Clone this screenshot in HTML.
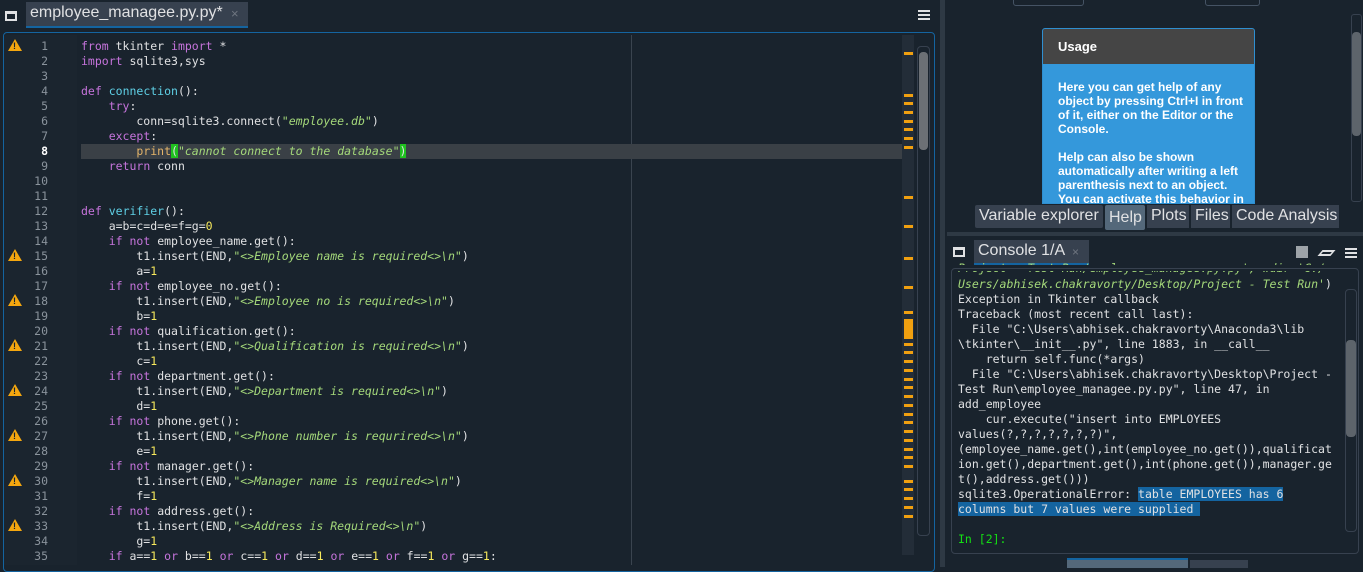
<!DOCTYPE html>
<html><head><meta charset="utf-8">
<style>
*{margin:0;padding:0;box-sizing:border-box}
body{width:1363px;height:567px;background:#19232d;position:relative;overflow:hidden;font-family:"Liberation Sans",sans-serif;color:#e0e1e3}
.abs{position:absolute}
.mono{font-family:"DejaVu Sans Mono","Liberation Mono",monospace;font-size:11.5px;white-space:pre}
.ln{position:absolute;left:24px;width:24px;text-align:right;color:#8a939c;font-family:"DejaVu Sans Mono",monospace;font-size:11.5px;line-height:15px}
.cl{position:absolute;left:81px;line-height:15px;color:#e0e1e3}
.k{color:#c674dc}.f{color:#5fd0e6}.s{color:#a4d87a;font-style:italic}.n{color:#f7e95c}.b{color:#e4b46a}
.warn{position:absolute;left:8px;width:0;height:0;border-left:7px solid transparent;border-right:7px solid transparent;border-bottom:12px solid #f5a70f}
.warn:after{content:"!";position:absolute;left:-2px;top:2px;font:bold 9px "Liberation Sans";color:#19232d}
.mk{position:absolute;left:904px;width:9px;height:3px;background:#f0a010}
.cons{position:absolute;left:958px;line-height:15px;color:#e0e1e3}
</style></head><body>
<div class="abs" style="left:5px;top:11px;width:12px;height:10px;border:2px solid #e0e1e3;border-top-width:3px"></div>
<div class="abs" style="left:26px;top:2px;width:222px;height:26px;background:#37414f;border-bottom:2px solid #1464a0"></div>
<div class="abs" style="left:30px;top:4px;font-size:16px;color:#e0e1e3">employee_managee.py.py*</div>
<div class="abs" style="left:231px;top:6px;font-size:13px;color:#6f7680">×</div>
<div class="abs" style="left:918px;top:10px;width:12px;height:2px;background:#e0e1e3;box-shadow:0 4px 0 #e0e1e3,0 8px 0 #e0e1e3"></div>
<div class="abs" style="left:3px;top:32px;width:932px;height:540px;border:1px solid #1464a0;border-radius:4px"></div>
<div class="abs" style="left:4px;top:35px;width:73px;height:530px;background:#1b252f"></div>
<div class="abs" style="left:631px;top:35px;width:1px;height:530px;background:#3a444f"></div>
<div class="abs" style="left:81px;top:144px;width:821px;height:15px;background:#3a4046"></div>
<div class="abs" style="left:902px;top:35px;width:12px;height:520px;background:#232d38"></div>
<div class="abs" style="left:917px;top:46px;width:13px;height:490px;border:1px solid #37414f;border-radius:4px"></div>
<div class="abs" style="left:919px;top:52px;width:9px;height:98px;background:#6c7075;border-radius:4px"></div>
<div class="mk" style="top:52px"></div><div class="mk" style="top:94px"></div><div class="mk" style="top:102px"></div><div class="mk" style="top:111px"></div><div class="mk" style="top:120px"></div><div class="mk" style="top:128px"></div><div class="mk" style="top:137px"></div><div class="mk" style="top:146px"></div><div class="mk" style="top:196px"></div><div class="mk" style="top:225px"></div><div class="mk" style="top:257px"></div><div class="mk" style="top:286px"></div><div class="mk" style="top:311px"></div>
<div class="mk" style="top:319px;height:20px"></div>
<div class="mk" style="top:343px"></div><div class="mk" style="top:351px"></div><div class="mk" style="top:360px"></div><div class="mk" style="top:369px"></div><div class="mk" style="top:378px"></div><div class="mk" style="top:386px"></div><div class="mk" style="top:395px"></div><div class="mk" style="top:404px"></div><div class="mk" style="top:413px"></div><div class="mk" style="top:421px"></div><div class="mk" style="top:430px"></div><div class="mk" style="top:439px"></div><div class="mk" style="top:448px"></div><div class="mk" style="top:456px"></div><div class="mk" style="top:465px"></div><div class="mk" style="top:480px"></div><div class="mk" style="top:488px"></div><div class="mk" style="top:497px"></div><div class="mk" style="top:506px"></div><div class="mk" style="top:515px"></div>
<div class="warn" style="top:39px"></div><div class="warn" style="top:249px"></div><div class="warn" style="top:294px"></div><div class="warn" style="top:339px"></div><div class="warn" style="top:384px"></div><div class="warn" style="top:429px"></div><div class="warn" style="top:474px"></div><div class="warn" style="top:519px"></div>
<div class="ln" style="top:39px">1<br>2<br>3<br>4<br>5<br>6<br>7<br><b style="color:#fff">8</b><br>9<br>10<br>11<br>12<br>13<br>14<br>15<br>16<br>17<br>18<br>19<br>20<br>21<br>22<br>23<br>24<br>25<br>26<br>27<br>28<br>29<br>30<br>31<br>32<br>33<br>34<br>35</div>
<div class="cl mono" style="top:39px"><span class="k">from</span> tkinter <span class="k">import</span> *
<span class="k">import</span> sqlite3,sys

<span class="k">def</span> <span class="f">connection</span>():
    <span class="k">try</span>:
        conn=sqlite3.connect(<span class="s">"employee.db"</span>)
    <span class="k">except</span>:
        <span class="b">print</span><span style="background:#1fc01f">(</span><span class="s">"cannot connect to the database"</span><span style="background:#1fc01f">)</span>
    <span class="k">return</span> conn


<span class="k">def</span> <span class="f">verifier</span>():
    a=b=c=d=e=f=g=<span class="n">0</span>
    <span class="k">if</span> <span class="k">not</span> employee_name.get():
        t1.insert(END,<span class="s">"&lt;&gt;Employee name is required&lt;&gt;\n"</span>)
        a=<span class="n">1</span>
    <span class="k">if</span> <span class="k">not</span> employee_no.get():
        t1.insert(END,<span class="s">"&lt;&gt;Employee no is required&lt;&gt;\n"</span>)
        b=<span class="n">1</span>
    <span class="k">if</span> <span class="k">not</span> qualification.get():
        t1.insert(END,<span class="s">"&lt;&gt;Qualification is required&lt;&gt;\n"</span>)
        c=<span class="n">1</span>
    <span class="k">if</span> <span class="k">not</span> department.get():
        t1.insert(END,<span class="s">"&lt;&gt;Department is required&lt;&gt;\n"</span>)
        d=<span class="n">1</span>
    <span class="k">if</span> <span class="k">not</span> phone.get():
        t1.insert(END,<span class="s">"&lt;&gt;Phone number is requrired&lt;&gt;\n"</span>)
        e=<span class="n">1</span>
    <span class="k">if</span> <span class="k">not</span> manager.get():
        t1.insert(END,<span class="s">"&lt;&gt;Manager name is required&lt;&gt;\n"</span>)
        f=<span class="n">1</span>
    <span class="k">if</span> <span class="k">not</span> address.get():
        t1.insert(END,<span class="s">"&lt;&gt;Address is Required&lt;&gt;\n"</span>)
        g=<span class="n">1</span>
    <span class="k">if</span> a==<span class="n">1</span> <span class="k">or</span> b==<span class="n">1</span> <span class="k">or</span> c==<span class="n">1</span> <span class="k">or</span> d==<span class="n">1</span> <span class="k">or</span> e==<span class="n">1</span> <span class="k">or</span> f==<span class="n">1</span> <span class="k">or</span> g==<span class="n">1</span>:</div>
<div class="abs" style="left:940px;top:0;width:5px;height:567px;background:#2e3944"></div>
<div class="abs" style="left:1013px;top:-4px;width:71px;height:10px;border:1px solid #455364;border-radius:3px"></div>
<div class="abs" style="left:1205px;top:-4px;width:55px;height:10px;border:1px solid #455364;border-radius:3px"></div>
<div class="abs" style="left:1042px;top:28px;width:213px;height:176px;background:#3498db;border:1px solid #2f8fd0;border-radius:3px 3px 0 0;overflow:hidden">
 <div style="height:35px;background:#454545;color:#fff;font-size:13px;font-weight:bold;padding:10px 0 0 15px">Usage</div>
 <div style="padding:16px 10px 0 15px;color:#fff;font-size:12px;line-height:14px;font-weight:bold">Here you can get help of any object by pressing Ctrl+I in front of it, either on the Editor or the Console.<br><br>Help can also be shown automatically after writing a left parenthesis next to an object. You can activate this behavior in</div>
</div>
<div class="abs" style="left:1351px;top:14px;width:11px;height:188px;border:1px solid #37414f;border-radius:3px"></div>
<div class="abs" style="left:1352px;top:32px;width:9px;height:104px;background:#5d646b;border-radius:4px"></div>
<div class="abs" style="left:975px;top:205px;width:128px;height:23px;background:#37414f;border-radius:2px"></div>
<div class="abs" style="left:1105px;top:205px;width:40px;height:25px;background:#54687a;border-radius:2px"></div>
<div class="abs" style="left:1147px;top:205px;width:42px;height:23px;background:#37414f"></div>
<div class="abs" style="left:1191px;top:205px;width:39px;height:23px;background:#37414f"></div>
<div class="abs" style="left:1232px;top:205px;width:107px;height:23px;background:#37414f"></div>
<div class="abs" style="left:979px;top:207px;font-size:16px;color:#e0e1e3;white-space:pre">Variable explorer</div>
<div class="abs" style="left:1109px;top:209px;font-size:16px">Help</div>
<div class="abs" style="left:1151px;top:207px;font-size:16px">Plots</div>
<div class="abs" style="left:1195px;top:207px;font-size:16px">Files</div>
<div class="abs" style="left:1236px;top:207px;font-size:16px">Code Analysis</div>
<div class="abs" style="left:947px;top:232px;width:416px;height:4px;background:#2e3944"></div>
<div class="abs" style="left:953px;top:247px;width:12px;height:10px;border:2px solid #e0e1e3;border-top-width:3px"></div>
<div class="abs" style="left:974px;top:240px;width:115px;height:25px;background:#37414f;border-bottom:2px solid #1464a0"></div>
<div class="abs" style="left:978px;top:242px;font-size:16px">Console 1/A</div>
<div class="abs" style="left:1072px;top:245px;font-size:12px;color:#6f7680">×</div>
<div class="abs" style="left:1296px;top:246px;width:12px;height:12px;background:#9da3a8"></div>
<div class="abs" style="left:1320px;top:250px;width:13px;height:6px;border:2px solid #e0e1e3;transform:skewX(-40deg)"></div>
<div class="abs" style="left:1345px;top:248px;width:12px;height:2px;background:#e0e1e3;box-shadow:0 4px 0 #e0e1e3,0 8px 0 #e0e1e3"></div>
<div class="cons mono" style="top:261px;color:#a4d87a"><span style="font-style:italic">Project - Test Run/employee_managee.py.py', wdir='C:/</span></div>
<div class="abs" style="left:947px;top:250px;width:400px;height:18px;background:transparent"></div>
<div class="abs" style="left:950px;top:265px;width:395px;height:6px;background:#19232d"></div>
<div class="abs" style="left:951px;top:268px;width:408px;height:286px;border:1px solid #37414f;border-radius:4px"></div>
<div class="abs" style="left:1345px;top:289px;width:12px;height:243px;border:1px solid #37414f;border-radius:4px"></div>
<div class="abs" style="left:1346px;top:340px;width:10px;height:97px;background:#5d646b;border-radius:4px"></div>
<div class="cons mono" style="top:277px"><span class="s">Users/abhisek.chakravorty/Desktop/Project - Test Run'</span>)
Exception in Tkinter callback
Traceback (most recent call last):
  File "C:\Users\abhisek.chakravorty\Anaconda3\lib
\tkinter\__init__.py", line 1883, in __call__
    return self.func(*args)
  File "C:\Users\abhisek.chakravorty\Desktop\Project -
Test Run\employee_managee.py.py", line 47, in
add_employee
    cur.execute("insert into EMPLOYEES
values(?,?,?,?,?,?,?)",
(employee_name.get(),int(employee_no.get()),qualificat
ion.get(),department.get(),int(phone.get()),manager.ge
t(),address.get()))
sqlite3.OperationalError: <span style="background:#1464a0">table EMPLOYEES has 6</span>
<span style="background:#1464a0">columns but 7 values were supplied </span>

<span style="color:#14e014">In [2]:</span></div>
<div class="abs" style="left:1067px;top:558px;width:121px;height:10px;background:#54687a;border-top:2px solid #1464a0"></div>
<div class="abs" style="left:1190px;top:560px;width:58px;height:8px;background:#37414f"></div>
</body></html>
